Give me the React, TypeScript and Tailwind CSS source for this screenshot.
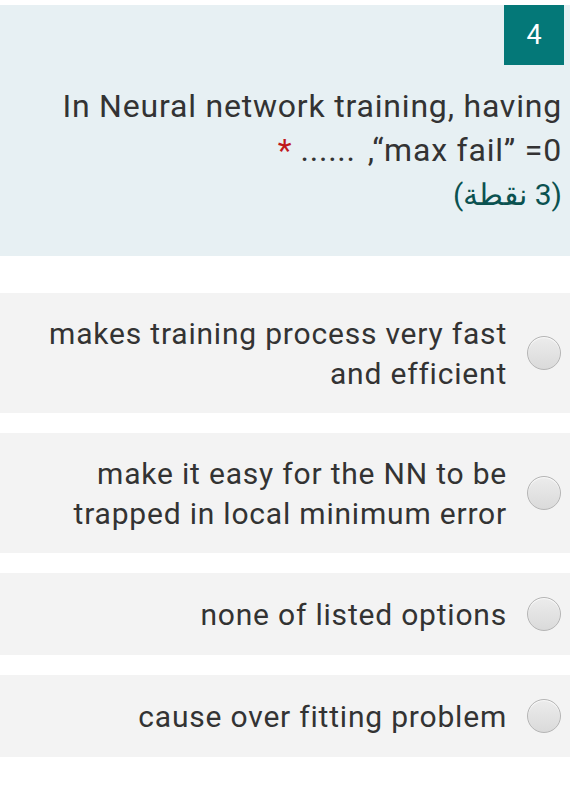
import React from "react";

const options: string[][] = [
  ["makes training process very fast", "and efficient"],
  ["make it easy for the NN to be", "trapped in local minimum error"],
  ["none of listed options"],
  ["cause over fitting problem"],
];

const Radio: React.FC = () => (
  <span className="block w-[34px] h-[34px] shrink-0 rounded-full border border-[#b5b5b5] bg-gradient-to-b from-[#ececec] to-[#dadada] shadow-[inset_0_1px_1px_rgba(255,255,255,0.8)]" />
);

export default function App() {
  return (
    <div className="w-[570px] min-h-[801px] bg-white pt-[5px] text-[#333333]" style={{ fontFamily: "Roboto, 'Noto Sans', sans-serif" }}>
      {/* Question header */}
      <div className="bg-[#e7f0f3] h-[251px] pr-[8px]">
        <div className="flex justify-end">
          <div className="w-[60px] h-[60px] bg-[#047878] text-white text-[27px] flex items-center justify-center mr-[-2px]">
            4
          </div>
        </div>
        <div className="text-right text-[32px] leading-[44px] tracking-[0.8px] mt-[19px]">
          <div>In Neural network training, having</div>
          <div>
            <span className="text-[#c0191b]">*</span>
            <span className="ml-[8px]">......</span>
            <span className="ml-[12px]">,“max fail” =0</span>
          </div>
          <div className="text-[#0b5250] tracking-normal text-[30px] mt-[1px]">
            (<span dir="rtl">3 نقطة</span>)
          </div>
        </div>
      </div>

      {/* Options */}
      <div className="mt-[37px] flex flex-col gap-[20px]">
        {options.map((lines, i) => (
          <div key={i} className="bg-[#f3f3f3] flex items-center justify-end min-h-[82px] pt-[21px] pb-[19px] pr-[9px]">
            <div className="text-right text-[30px] leading-[40px] tracking-[0.8px]">
              {lines.map((l, j) => (
                <div key={j}>{l}</div>
              ))}
            </div>
            <div className="ml-[20px] -mt-[2px]">
              <Radio />
            </div>
          </div>
        ))}
      </div>
    </div>
  );
}
